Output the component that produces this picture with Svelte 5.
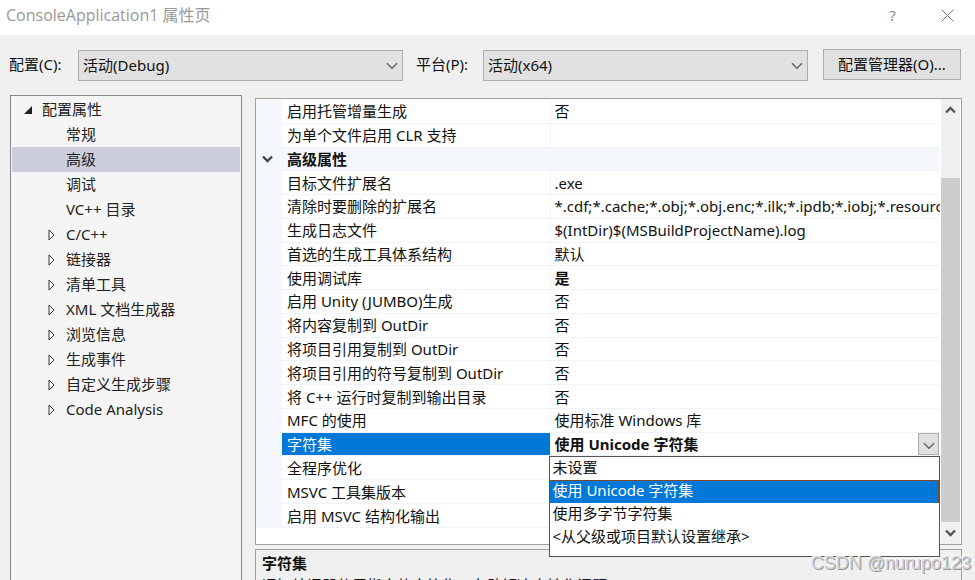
<script>
  const tree = [
    { label: '常规' },
    { label: '高级', selected: true },
    { label: '调试' },
    { label: 'VC++ 目录' },
    { label: 'C/C++', branch: true },
    { label: '链接器', branch: true },
    { label: '清单工具', branch: true },
    { label: 'XML 文档生成器', branch: true },
    { label: '浏览信息', branch: true },
    { label: '生成事件', branch: true },
    { label: '自定义生成步骤', branch: true },
    { label: 'Code Analysis', branch: true }
  ];

  const rows = [
    { name: '启用托管增量生成', value: '否' },
    { name: '为单个文件启用 CLR 支持', value: '' },
    { name: '高级属性', group: true },
    { name: '目标文件扩展名', value: '.exe' },
    { name: '清除时要删除的扩展名', value: '*.cdf;*.cache;*.obj;*.obj.enc;*.ilk;*.ipdb;*.iobj;*.resource' },
    { name: '生成日志文件', value: '$(IntDir)$(MSBuildProjectName).log' },
    { name: '首选的生成工具体系结构', value: '默认' },
    { name: '使用调试库', value: '是', changed: true },
    { name: '启用 Unity (JUMBO)生成', value: '否' },
    { name: '将内容复制到 OutDir', value: '否' },
    { name: '将项目引用复制到 OutDir', value: '否' },
    { name: '将项目引用的符号复制到 OutDir', value: '否' },
    { name: '将 C++ 运行时复制到输出目录', value: '否' },
    { name: 'MFC 的使用', value: '使用标准 Windows 库' },
    { name: '字符集', value: '使用 Unicode 字符集', changed: true, editing: true },
    { name: '全程序优化', value: '' },
    { name: 'MSVC 工具集版本', value: '' },
    { name: '启用 MSVC 结构化输出', value: '' }
  ];

  const options = ['未设置', '使用 Unicode 字符集', '使用多字节字符集', '<从父级或项目默认设置继承>'];
  let chosen = $state(1);
</script>

{#snippet chevron(dir)}
  <svg class="chevron" class:up={dir === 'up'} width="12" height="8" viewBox="0 0 12 8" aria-hidden="true">
    <path d="M1 1.2 6 6.2 11 1.2" fill="none" stroke="currentColor" />
  </svg>
{/snippet}

{#snippet heavyChevron(dir)}
  <svg class="chevron heavy" class:up={dir === 'up'} width="11" height="8" viewBox="0 0 11 8" aria-hidden="true">
    <path d="M1 1.5 5.5 6 10 1.5" fill="none" stroke="currentColor" />
  </svg>
{/snippet}

<div class="dialog">
  <header>
    <h1>ConsoleApplication1 属性页</h1>
    <button class="caption" aria-label="帮助">?</button>
    <button class="caption" aria-label="关闭">
      <svg width="13" height="13" viewBox="0 0 13 13"><path d="M.5.5l12 12M12.5.5l-12 12" stroke="#777" fill="none" /></svg>
    </button>
  </header>

  <div class="toolbar">
    <label for="config">配置(C):</label>
    <div class="combo">
      <select id="config"><option>活动(Debug)</option></select>
      {@render chevron('down')}
    </div>
    <label for="platform">平台(P):</label>
    <div class="combo last">
      <select id="platform"><option>活动(x64)</option></select>
      {@render chevron('down')}
    </div>
    <button class="manager">配置管理器(O)...</button>
  </div>

  <main>
    <nav class="tree" aria-label="配置属性">
      <div class="node root">
        <svg width="8" height="8" viewBox="0 0 8 8"><path d="M8 0v8H0z" fill="#222" /></svg>
        <span>配置属性</span>
      </div>
      {#each tree as item}
        <div class="node" class:selected={item.selected}>
          <svg width="8" height="13" viewBox="0 0 8 13">
            {#if item.branch}<path d="M1 2v10l5-5z" fill="#fff" stroke="#333" />{/if}
          </svg>
          <span>{item.label}</span>
        </div>
      {/each}
    </nav>

    <section class="content">
      <div class="grid">
        <div class="sheet">
          <table>
            <colgroup><col class="gutter" /><col class="names" /><col /></colgroup>
            <tbody>
              {#each rows as row}
                <tr class:group={row.group} class:editing={row.editing}>
                  <td class="mark">{#if row.group}{@render heavyChevron('down')}{/if}</td>
                  <th scope="row">{row.name}</th>
                  <td class="value" class:changed={row.changed}>
                    {#if row.editing}
                      <div class="editor">
                        <span>{row.value}</span>
                        <button class="drop" aria-label="展开">{@render chevron('down')}</button>
                        <div class="popup" role="listbox" aria-label="字符集">
                          {#each options as option, i}
                            <button role="option" aria-selected={chosen === i} onclick={() => (chosen = i)}>{option}</button>
                          {/each}
                        </div>
                      </div>
                    {:else}
                      {row.value ?? ''}
                    {/if}
                  </td>
                </tr>
              {/each}
            </tbody>
          </table>
        </div>
        <div class="scrollbar">
          <button aria-label="向上滚动">{@render heavyChevron('up')}</button>
          <div class="track"><div class="thumb"></div></div>
          <button aria-label="向下滚动">{@render heavyChevron('down')}</button>
        </div>
      </div>

      <div class="description">
        <strong>字符集</strong>
        <p>通知编译器使用指定的字符集；有助解决本地化问题。</p>
      </div>
    </section>
  </main>

  <div class="watermark">CSDN @nurupo123</div>
</div>

<style>
  :global(body) {
    margin: 0;
    background: #f0f0f0;
  }

  .dialog {
    position: relative;
    display: flex;
    flex-direction: column;
    height: 100vh;
    overflow: hidden;
    background: #f0f0f0;
    color: #111;
    font: 15px/20px 'Noto Sans', 'Noto Sans CJK SC', sans-serif;
  }

  button,
  select {
    box-sizing: border-box;
    margin: 0;
    padding: 0;
    border: 0;
    border-radius: 0;
    background: none;
    color: inherit;
    font: inherit;
  }

  header {
    display: flex;
    flex: none;
    align-items: center;
    height: 35px;
    padding: 0 0 5px 6px;
    box-sizing: border-box;
    background: #fff;
    color: #999;
  }

  h1 {
    flex: 1;
    margin: 0;
    font: 16px/24px 'Open Sans', 'Noto Sans CJK SC', sans-serif;
  }

  .caption {
    display: flex;
    align-items: center;
    justify-content: center;
    width: 55px;
    height: 30px;
    color: #888;
  }

  .toolbar {
    display: flex;
    flex: none;
    align-items: center;
    height: 60px;
    padding: 0 14px 0 9px;
  }

  .toolbar label {
    flex: none;
    width: 69px;
    padding-bottom: 2px;
  }

  .combo {
    position: relative;
    flex: 1;
    margin-right: 13px;
  }

  .combo.last {
    margin-right: 15px;
  }

  .combo + label {
    width: 67px;
  }

  .combo select {
    display: block;
    width: 100%;
    height: 31px;
    padding: 0 4px;
    appearance: none;
    border: 1px solid #adadad;
    background: #e1e1e1;
  }

  .combo .chevron {
    position: absolute;
    top: 12px;
    right: 5px;
    color: #666;
    pointer-events: none;
  }

  .manager {
    flex: none;
    width: 138px;
    height: 31px;
    margin-bottom: 2px;
    border: 1px solid #adadad;
    background: #e1e1e1;
  }

  .chevron path {
    stroke-width: 1.5;
  }

  .heavy {
    display: block;
    margin: 0 auto;
  }

  .heavy path {
    stroke-width: 2.4;
  }

  .chevron.up {
    transform: rotate(180deg);
  }

  main {
    display: flex;
    flex: 1;
    min-height: 0;
    padding: 0 13px 0 10px;
    gap: 13px;
  }

  .tree {
    flex: none;
    width: 228px;
    padding: 1px;
    border: 1px solid #828790;
    border-bottom: 0;
    background: #f5f5f5;
    color: #222;
  }

  .node {
    display: flex;
    align-items: center;
    height: 25px;
    padding-left: 36px;
    gap: 10px;
  }

  .node span {
    padding-bottom: 2px;
  }

  .node.root {
    padding-left: 12px;
  }

  .node.selected {
    background: #cccedb;
  }

  .content {
    display: flex;
    flex: 1;
    flex-direction: column;
    min-width: 0;
    padding-top: 3px;
    gap: 4px;
  }

  .grid {
    display: flex;
    flex: none;
    border: 1px solid #a0a0a0;
    background: #fff;
  }

  .sheet {
    flex: 1;
    min-width: 0;
    padding: 1px 0 16px;
  }

  table {
    width: 100%;
    height: 428px;
    table-layout: fixed;
    border-collapse: collapse;
  }

  .gutter {
    width: 26px;
  }

  .names {
    width: 268px;
  }

  td,
  th {
    box-sizing: border-box;
    padding: 0 5px;
    border-bottom: 1px solid #f0f3f9;
    line-height: 22px;
    white-space: nowrap;
    text-align: left;
    font-weight: 400;
  }

  .mark {
    padding: 0;
    background: #f4f7fc;
    color: #444;
  }

  .mark .heavy {
    margin-left: 6px;
  }

  .value {
    overflow: hidden;
    padding: 0 0 0 4px;
    border-left: 1px solid #f0f3f9;
  }

  .group td,
  .group th {
    border-left: 0;
    background: #f4f7fc;
    font-weight: 700;
  }

  .changed {
    font-weight: 700;
  }

  .editing th {
    background: #0078d7;
    color: #fff;
  }

  .editing .value {
    overflow: visible;
    padding-right: 1px;
  }

  .editor {
    position: relative;
    display: flex;
    align-items: center;
    justify-content: space-between;
    height: 22px;
  }

  .drop {
    width: 21px;
    height: 22px;
    border: 1px solid #adadad;
    background: #e1e1e1;
    color: #666;
    line-height: 12px;
  }

  .popup {
    position: absolute;
    z-index: 2;
    top: calc(100% + 1px);
    right: -1px;
    left: -6px;
    padding-bottom: 7px;
    border: 1px solid #555;
    background: #fff;
    font-weight: 400;
  }

  .popup button {
    display: block;
    width: 100%;
    height: 23px;
    padding: 0 3px 2px;
    line-height: 21px;
    text-align: left;
  }

  .popup button[aria-selected='true'] {
    background: #0078d7;
    box-shadow: inset -1px 1px 0 #7a4a28;
    color: #fff;
  }

  .scrollbar {
    display: flex;
    flex: none;
    flex-direction: column;
    width: 19px;
    margin: 0 1px;
    background: #f0f0f0;
    color: #555;
  }

  .scrollbar button {
    height: 22px;
  }

  .track {
    display: flex;
    flex: 1;
    padding-top: 57px;
  }

  .thumb {
    flex: 1;
    background: #cdcdcd;
  }

  .description {
    flex: 1;
    min-height: 0;
    padding: 3px 6px;
    border: 1px solid #a0a0a0;
    border-bottom: 0;
  }

  .description p {
    margin: 2px 0 0;
  }

  .watermark {
    position: absolute;
    z-index: 3;
    right: 4px;
    bottom: 5px;
    color: #d0d0d0;
    font: 18px/24px 'Liberation Sans', Arial, sans-serif;
    text-shadow: 1px 1px 0 #999, -1px -1px 0 #fff;
  }
</style>
